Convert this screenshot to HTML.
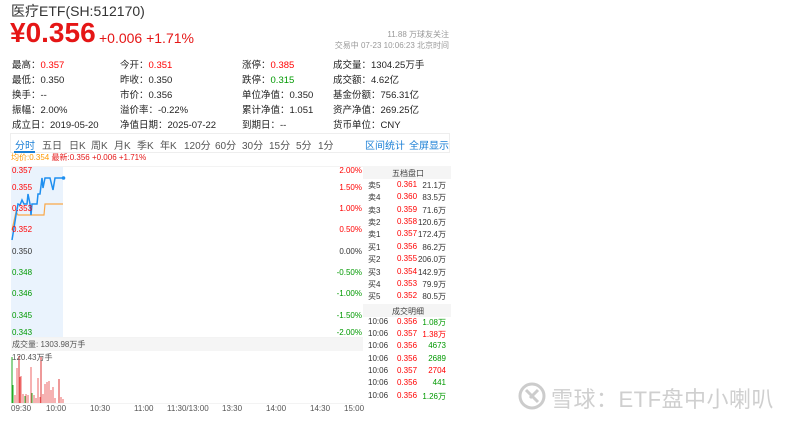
<!DOCTYPE html>
<html><head><meta charset="utf-8"><style>
*{margin:0;padding:0;box-sizing:border-box}
body{width:800px;height:422px;background:#fff;font-family:"Liberation Sans","Noto Sans CJK SC",sans-serif;color:#333;position:relative;overflow:hidden}
.a{position:absolute;white-space:nowrap}
.r{color:#f00}.g{color:#090}
.st{font-size:9.5px;color:#222}
.tab{font-size:10px;color:#555}
.sm{font-size:8px}
</style></head><body>
<div class="a" style="left:11px;top:1px;font-size:14px;color:#333">医疗ETF(SH:512170)</div>
<div class="a r" style="left:10px;top:17px;font-size:28px;font-weight:bold;color:#e51616">¥0.356</div>
<div class="a" style="left:99px;top:30px;font-size:14px;color:#e51616">+0.006 +1.71%</div>
<div class="a" style="right:351px;top:29px;font-size:8px;color:#999">11.88 万球友关注</div>
<div class="a" style="right:351px;top:40px;font-size:8px;color:#999">交易中 07-23 10:06:23 北京时间</div>

<div class="st">
<div class="a" style="left:12px;top:57px">最高：<span class="r">0.357</span></div>
<div class="a" style="left:120px;top:57px">今开：<span class="r">0.351</span></div>
<div class="a" style="left:242px;top:57px">涨停：<span class="r">0.385</span></div>
<div class="a" style="left:333px;top:57px">成交量：1304.25万手</div>
<div class="a" style="left:12px;top:72px">最低：0.350</div>
<div class="a" style="left:120px;top:72px">昨收：0.350</div>
<div class="a" style="left:242px;top:72px">跌停：<span class="g">0.315</span></div>
<div class="a" style="left:333px;top:72px">成交额：4.62亿</div>
<div class="a" style="left:12px;top:87px">换手：--</div>
<div class="a" style="left:120px;top:87px">市价：0.356</div>
<div class="a" style="left:242px;top:87px">单位净值：0.350</div>
<div class="a" style="left:333px;top:87px">基金份额：756.31亿</div>
<div class="a" style="left:12px;top:102px">振幅：2.00%</div>
<div class="a" style="left:120px;top:102px">溢价率：-0.22%</div>
<div class="a" style="left:242px;top:102px">累计净值：1.051</div>
<div class="a" style="left:333px;top:102px">资产净值：269.25亿</div>
<div class="a" style="left:12px;top:117px">成立日：2019-05-20</div>
<div class="a" style="left:120px;top:117px">净值日期：2025-07-22</div>
<div class="a" style="left:242px;top:117px">到期日：--</div>
<div class="a" style="left:333px;top:117px">货币单位：CNY</div>
</div>

<div class="a" style="left:10px;top:133px;width:440px;height:20px;border:1px solid #eee"></div>
<div class="a tab" style="left:15px;top:137px;color:#1a7fd6">分时</div>
<div class="a" style="left:14px;top:151px;width:21px;height:2px;background:#1a7fd6"></div>
<div class="a tab" style="left:42px;top:137px">五日</div>
<div class="a tab" style="left:69px;top:137px">日K</div>
<div class="a tab" style="left:91px;top:137px">周K</div>
<div class="a tab" style="left:114px;top:137px">月K</div>
<div class="a tab" style="left:137px;top:137px">季K</div>
<div class="a tab" style="left:160px;top:137px">年K</div>
<div class="a tab" style="left:184px;top:137px">120分</div>
<div class="a tab" style="left:215px;top:137px">60分</div>
<div class="a tab" style="left:242px;top:137px">30分</div>
<div class="a tab" style="left:269px;top:137px">15分</div>
<div class="a tab" style="left:296px;top:137px">5分</div>
<div class="a tab" style="left:318px;top:137px">1分</div>
<div class="a tab" style="left:365px;top:137px;color:#1a7fd6">区间统计</div>
<div class="a tab" style="left:409px;top:137px;color:#1a7fd6">全屏显示</div>
<div class="a sm" style="left:11px;top:152px"><span style="color:#f90">均价:0.354</span> <span style="color:#e51616">最新:0.356 +0.006 +1.71%</span></div>

<svg class="a" style="left:0;top:0" width="800" height="422">
<rect x="11" y="166" width="52" height="172" fill="#eaf3fd"/>
<g stroke="#f3f3f3" stroke-width="1">
<line x1="11" y1="166.5" x2="363" y2="166.5"/><line x1="11" y1="337.5" x2="363" y2="337.5"/>
<line x1="11" y1="403.5" x2="363" y2="403.5"/>
</g>
<rect x="11" y="338" width="352" height="13" fill="#f5f5f5"/>
<polyline fill="none" stroke="#f9a84a" stroke-width="1.2" points="12,230 16,212 18,215 44,215 45,204 63,204"/>
<polyline fill="none" stroke="#1e8ff0" stroke-width="1.5" points="12,240 14,228 16,215 18,204 20,205 22,200 24,204 27,204 28,194 30,204 31,215 32,204 34,204 37,204 38,194 40,194 42,178 43,188 45,178 47,178 50,178 53,190 55,178 57,178 60,178 63,178"/>
<circle cx="63.5" cy="178" r="1.8" fill="#1e8ff0"/>
<g stroke-width="1">
<line x1="12" y1="403" x2="12" y2="357" stroke="#2a2"/>
<line x1="13" y1="403" x2="13" y2="385" stroke="#2a2"/>
<line x1="15" y1="403" x2="15" y2="395" stroke="#e66"/>
<line x1="17" y1="403" x2="17" y2="368" stroke="#e66"/>
<line x1="19" y1="403" x2="19" y2="356" stroke="#d33"/>
<line x1="20" y1="403" x2="20" y2="377" stroke="#e66"/>
<line x1="21" y1="403" x2="21" y2="376" stroke="#e66"/>
<line x1="23" y1="403" x2="23" y2="394" stroke="#e66"/>
<line x1="25" y1="403" x2="25" y2="396" stroke="#2a2"/>
<line x1="26" y1="403" x2="26" y2="394" stroke="#e66"/>
<line x1="28" y1="403" x2="28" y2="395" stroke="#e66"/>
<line x1="31" y1="403" x2="31" y2="367" stroke="#e66"/>
<line x1="32" y1="403" x2="32" y2="393" stroke="#2a2"/>
<line x1="34" y1="403" x2="34" y2="395" stroke="#e66"/>
<line x1="36" y1="403" x2="36" y2="398" stroke="#e66"/>
<line x1="38" y1="403" x2="38" y2="378" stroke="#e66"/>
<line x1="40" y1="403" x2="40" y2="397" stroke="#e66"/>
<line x1="41" y1="403" x2="41" y2="357" stroke="#d33"/>
<line x1="43" y1="403" x2="43" y2="394" stroke="#e66"/>
<line x1="45" y1="403" x2="45" y2="384" stroke="#e66"/>
<line x1="47" y1="403" x2="47" y2="382" stroke="#e66"/>
<line x1="49" y1="403" x2="49" y2="381" stroke="#e66"/>
<line x1="51" y1="403" x2="51" y2="390" stroke="#e66"/>
<line x1="53" y1="403" x2="53" y2="387" stroke="#e66"/>
<line x1="55" y1="403" x2="55" y2="398" stroke="#e66"/>
<line x1="59" y1="403" x2="59" y2="379" stroke="#d33"/>
<line x1="61" y1="403" x2="61" y2="397" stroke="#e66"/>
<line x1="63" y1="403" x2="63" y2="399" stroke="#e66"/>
</g>
<rect x="363" y="166" width="88" height="13" fill="#f5f5f5"/>
<rect x="363" y="304" width="88" height="13" fill="#f5f5f5"/>
</svg>

<div class="sm">
<div class="a r" style="left:12px;top:166px">0.357</div>
<div class="a r" style="left:12px;top:183px">0.355</div>
<div class="a r" style="left:12px;top:204px">0.353</div>
<div class="a r" style="left:12px;top:225px">0.352</div>
<div class="a" style="left:12px;top:247px">0.350</div>
<div class="a g" style="left:12px;top:268px">0.348</div>
<div class="a g" style="left:12px;top:289px">0.346</div>
<div class="a g" style="left:12px;top:311px">0.345</div>
<div class="a g" style="left:12px;top:328px">0.343</div>
<div class="a r" style="right:438px;top:166px">2.00%</div>
<div class="a r" style="right:438px;top:183px">1.50%</div>
<div class="a r" style="right:438px;top:204px">1.00%</div>
<div class="a r" style="right:438px;top:225px">0.50%</div>
<div class="a" style="right:438px;top:247px">0.00%</div>
<div class="a g" style="right:438px;top:268px">-0.50%</div>
<div class="a g" style="right:438px;top:289px">-1.00%</div>
<div class="a g" style="right:438px;top:311px">-1.50%</div>
<div class="a g" style="right:438px;top:328px">-2.00%</div>
<div class="a" style="left:12px;top:339px;color:#555">成交量: 1303.98万手</div>
<div class="a" style="left:12px;top:352px;color:#555">120.43万手</div>
<div class="a" style="left:11px;top:404px;color:#555">09:30</div>
<div class="a" style="left:46px;top:404px;color:#555">10:00</div>
<div class="a" style="left:90px;top:404px;color:#555">10:30</div>
<div class="a" style="left:134px;top:404px;color:#555">11:00</div>
<div class="a" style="left:167px;top:404px;color:#555">11:30/13:00</div>
<div class="a" style="left:222px;top:404px;color:#555">13:30</div>
<div class="a" style="left:266px;top:404px;color:#555">14:00</div>
<div class="a" style="left:310px;top:404px;color:#555">14:30</div>
<div class="a" style="left:344px;top:404px;color:#555">15:00</div>
</div>

<div class="sm" style="color:#444">
<div class="a" style="left:392px;top:168px">五档盘口</div>
<div class="a" style="left:392px;top:306px">成交明细</div>
</div>
<div class="sm">
<div class="a" style="left:368px;top:180px">卖5</div><div class="a r" style="left:397px;top:180px">0.361</div><div class="a" style="right:354px;top:180px">21.1万</div>
<div class="a" style="left:368px;top:192px">卖4</div><div class="a r" style="left:397px;top:192px">0.360</div><div class="a" style="right:354px;top:192px">83.5万</div>
<div class="a" style="left:368px;top:205px">卖3</div><div class="a r" style="left:397px;top:205px">0.359</div><div class="a" style="right:354px;top:205px">71.6万</div>
<div class="a" style="left:368px;top:217px">卖2</div><div class="a r" style="left:397px;top:217px">0.358</div><div class="a" style="right:354px;top:217px">120.6万</div>
<div class="a" style="left:368px;top:229px">卖1</div><div class="a r" style="left:397px;top:229px">0.357</div><div class="a" style="right:354px;top:229px">172.4万</div>
<div class="a" style="left:368px;top:242px">买1</div><div class="a r" style="left:397px;top:242px">0.356</div><div class="a" style="right:354px;top:242px">86.2万</div>
<div class="a" style="left:368px;top:254px">买2</div><div class="a r" style="left:397px;top:254px">0.355</div><div class="a" style="right:354px;top:254px">206.0万</div>
<div class="a" style="left:368px;top:267px">买3</div><div class="a r" style="left:397px;top:267px">0.354</div><div class="a" style="right:354px;top:267px">142.9万</div>
<div class="a" style="left:368px;top:279px">买4</div><div class="a r" style="left:397px;top:279px">0.353</div><div class="a" style="right:354px;top:279px">79.9万</div>
<div class="a" style="left:368px;top:291px">买5</div><div class="a r" style="left:397px;top:291px">0.352</div><div class="a" style="right:354px;top:291px">80.5万</div>
<div class="a" style="left:368px;top:317px">10:06</div><div class="a r" style="left:397px;top:317px">0.356</div><div class="a g" style="right:354px;top:317px">1.08万</div>
<div class="a" style="left:368px;top:329px">10:06</div><div class="a r" style="left:397px;top:329px">0.357</div><div class="a r" style="right:354px;top:329px">1.38万</div>
<div class="a" style="left:368px;top:341px">10:06</div><div class="a r" style="left:397px;top:341px">0.356</div><div class="a g" style="right:354px;top:341px">4673</div>
<div class="a" style="left:368px;top:354px">10:06</div><div class="a r" style="left:397px;top:354px">0.356</div><div class="a g" style="right:354px;top:354px">2689</div>
<div class="a" style="left:368px;top:366px">10:06</div><div class="a r" style="left:397px;top:366px">0.357</div><div class="a r" style="right:354px;top:366px">2704</div>
<div class="a" style="left:368px;top:378px">10:06</div><div class="a r" style="left:397px;top:378px">0.356</div><div class="a g" style="right:354px;top:378px">441</div>
<div class="a" style="left:368px;top:391px">10:06</div><div class="a r" style="left:397px;top:391px">0.356</div><div class="a g" style="right:354px;top:391px">1.26万</div>
</div>

<svg class="a" style="left:518px;top:382px" width="30" height="30"><circle cx="14" cy="14" r="12" fill="none" stroke="#ccc" stroke-width="3"/><path d="M8 8 L20 20 M20 8 L12 16" stroke="#ccc" stroke-width="3" fill="none"/></svg>
<div class="a" style="left:551px;top:382px;font-size:22px;color:#cfcfcf;letter-spacing:0.5px">雪球：ETF盘中小喇叭</div>
</body></html>
